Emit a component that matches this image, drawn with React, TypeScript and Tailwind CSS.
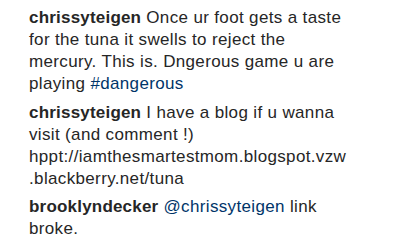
export default function App() {
  const comments = [
    {
      user: "chrissyteigen",
      body: (
        <>
          Once ur foot gets a taste for the tuna it swells to reject the mercury. This is. Dngerous game u are
          playing <a className="text-[#003569]">#dangerous</a>
        </>
      ),
    },
    {
      user: "chrissyteigen",
      body: (
        <>
          I have a blog if u wanna visit (and comment !) hppt://iamthesmartestmom.blogspot.vzw<wbr />.blackberry.net/tuna
        </>
      ),
    },
    {
      user: "brooklyndecker",
      body: (
        <>
          <a className="text-[#003569]">@chrissyteigen</a> link broke.
        </>
      ),
    },
  ];

  return (
    <div className="h-[246px] w-[397px] overflow-hidden bg-white pl-[29px] pt-[7px] font-['Liberation_Sans',Arial,sans-serif] text-[17px] leading-[22px] tracking-[0.35px] text-[#262626]">
      <ul className="flex w-[327px] flex-col gap-[6.5px]">
        {comments.map((c, i) => (
          <li key={i}>
            <span className="font-bold tracking-[0.2px]">{c.user}</span> {c.body}
          </li>
        ))}
      </ul>
    </div>
  );
}
